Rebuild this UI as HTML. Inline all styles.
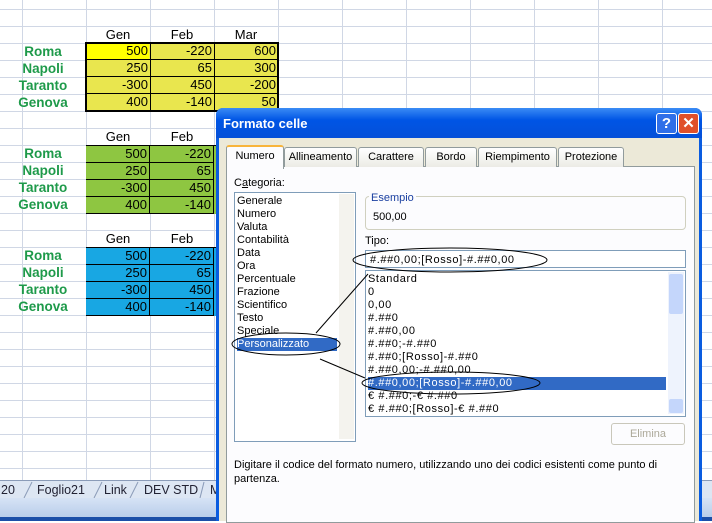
<!DOCTYPE html>
<html><head><meta charset="utf-8"><style>
body{margin:0;width:712px;height:521px;overflow:hidden;background:#fff;position:relative;font-family:"Liberation Sans",sans-serif}
.a{position:absolute}
.grid{position:absolute;left:0;top:0;width:712px;height:480px;
background-image:linear-gradient(#d0d7e5 1px,transparent 1px),linear-gradient(90deg,#d0d7e5 1px,transparent 1px);
background-size:64px 17px;background-position:22px 9px}
.lbl{position:absolute;left:0;width:86px;text-align:center;color:#1e9a4a;font-weight:bold;font-size:13.5px;line-height:17px}
.hd{position:absolute;width:64px;text-align:center;font-size:13px;line-height:17px;color:#000}
.c{position:absolute;width:61px;text-align:right;font-size:13px;line-height:16px;height:16px;padding-right:2px;border-right:1px solid #000;border-bottom:1px solid #000}
.t{font-family:"Liberation Sans",sans-serif;font-size:11px}
.tab{position:absolute;top:147px;height:19px;border:1px solid #919b9c;border-bottom:none;background:linear-gradient(#fff,#ecebe5);line-height:19px;text-align:center;font-size:11px;border-radius:3px 3px 0 0}
.li{height:13px;line-height:13px;white-space:nowrap}
.ty .li{letter-spacing:0.6px}
</style></head><body>
<div class="grid"></div>
<div class="hd" style="left:86px;top:26px">Gen</div><div class="hd" style="left:150px;top:26px">Feb</div><div class="hd" style="left:214px;top:26px">Mar</div>
<div class="lbl" style="top:43px">Roma</div><div class="lbl" style="top:60px">Napoli</div><div class="lbl" style="top:77px">Taranto</div><div class="lbl" style="top:94px">Genova</div>
<div class="a" style="left:85px;top:42px;width:190px;height:66px;border:2px solid #000;background:#e9e64e;box-sizing:content-box"></div>
<div class="a" style="left:87px;top:44px;width:62px;height:16px;background:#ffff00"></div>
<div class="a" style="left:86px;top:145px;width:130px;height:68px;background:#8ec641;border-top:1px solid #000"></div>
<div class="a" style="left:86px;top:247px;width:130px;height:68px;background:#18a7e3;border-top:1px solid #000"></div>
<div class="hd" style="left:86px;top:128px">Gen</div><div class="hd" style="left:150px;top:128px">Feb</div>
<div class="lbl" style="top:145px">Roma</div><div class="lbl" style="top:162px">Napoli</div><div class="lbl" style="top:179px">Taranto</div><div class="lbl" style="top:196px">Genova</div>
<div class="hd" style="left:86px;top:230px">Gen</div><div class="hd" style="left:150px;top:230px">Feb</div>
<div class="lbl" style="top:247px">Roma</div><div class="lbl" style="top:264px">Napoli</div><div class="lbl" style="top:281px">Taranto</div><div class="lbl" style="top:298px">Genova</div>

<div class="c" style="left:87px;top:43px">500</div><div class="c" style="left:151px;top:43px">-220</div><div class="c" style="left:215px;top:43px;border-right:none">600</div>
<div class="c" style="left:87px;top:60px">250</div><div class="c" style="left:151px;top:60px">65</div><div class="c" style="left:215px;top:60px;border-right:none">300</div>
<div class="c" style="left:87px;top:77px">-300</div><div class="c" style="left:151px;top:77px">450</div><div class="c" style="left:215px;top:77px;border-right:none">-200</div>
<div class="c" style="left:87px;top:94px;border-bottom:none">400</div><div class="c" style="left:151px;top:94px;border-bottom:none">-140</div><div class="c" style="left:215px;top:94px;border:none">50</div>

<div class="c" style="left:86px;top:146px">500</div><div class="c" style="left:150px;top:146px">-220</div>
<div class="c" style="left:86px;top:163px">250</div><div class="c" style="left:150px;top:163px">65</div>
<div class="c" style="left:86px;top:180px">-300</div><div class="c" style="left:150px;top:180px">450</div>
<div class="c" style="left:86px;top:197px">400</div><div class="c" style="left:150px;top:197px">-140</div>
<div class="c" style="left:86px;top:248px">500</div><div class="c" style="left:150px;top:248px">-220</div>
<div class="c" style="left:86px;top:265px">250</div><div class="c" style="left:150px;top:265px">65</div>
<div class="c" style="left:86px;top:282px">-300</div><div class="c" style="left:150px;top:282px">450</div>
<div class="c" style="left:86px;top:299px">400</div><div class="c" style="left:150px;top:299px">-140</div>

<div class="a" style="left:0;top:480px;width:712px;height:18px;background:#dde6f3;border-top:1px solid #8a9bb8;font-size:12.5px;line-height:18px;color:#223">
<span style="position:absolute;left:1px">20</span><span style="position:absolute;left:37px">Foglio21</span><span style="position:absolute;left:104px">Link</span><span style="position:absolute;left:144px">DEV STD</span><span style="position:absolute;left:210px">M</span>
<svg style="position:absolute;left:0;top:0" width="216" height="18"><g stroke="#8a9bb8" fill="none"><line x1="24" y1="17" x2="32" y2="1"/><line x1="94" y1="17" x2="102" y2="1"/><line x1="130" y1="17" x2="138" y2="1"/><line x1="200" y1="17" x2="204" y2="1"/></g></svg></div>
<div class="a" style="left:0;top:498px;width:712px;height:19px;background:linear-gradient(#d6e3f5,#b9cdea)"></div>
<div class="a" style="left:0;top:517px;width:712px;height:4px;background:#1c4fa8"></div>

<div class="a" style="left:216px;top:108px;width:486px;height:413px;background:#0a5ce0;border-radius:7px 7px 0 0"></div>
<div class="a" style="left:216px;top:108px;width:486px;height:30px;background:linear-gradient(#3b8cf5,#0055e5 40%,#0450d8);border-radius:7px 7px 0 0"></div>
<div class="a" style="left:223px;top:116px;color:#fff;font-weight:bold;font-size:13px">Formato celle</div>
<div class="a" style="left:656px;top:113px;width:19px;height:19px;background:#2f6fe8;border:1px solid #fff;border-radius:3px;color:#fff;font-weight:bold;font-size:15px;text-align:center;line-height:19px">?</div>
<div class="a" style="left:678px;top:113px;width:19px;height:19px;background:#e0502a;border:1px solid #fff;border-radius:3px;color:#fff;font-weight:bold;font-size:15px;text-align:center;line-height:19px">✕</div>
<div class="a" style="left:219px;top:138px;width:480px;height:383px;background:#ece9d8"></div>
<div class="a" style="left:226px;top:166px;width:467px;height:355px;background:#fcfcfe;border:1px solid #919b9c"></div>
<div class="tab t" style="left:226px;top:145px;height:22px;width:56px;background:#fcfcfe;border-top:2px solid #f8b43a">Numero</div>
<div class="tab t" style="left:284px;width:71px">Allineamento</div>
<div class="tab t" style="left:358px;width:64px">Carattere</div>
<div class="tab t" style="left:425px;width:50px">Bordo</div>
<div class="tab t" style="left:478px;width:77px">Riempimento</div>
<div class="tab t" style="left:558px;width:64px">Protezione</div>

<div class="a t" style="left:234px;top:177px">C<u>a</u>tegoria:</div>
<div class="a t" style="left:234px;top:192px;width:120px;height:248px;background:#fff;border:1px solid #7f9db9">
<div style="padding:2px 0 0 2px">
<div class="li">Generale</div><div class="li">Numero</div><div class="li">Valuta</div><div class="li">Contabilità</div><div class="li">Data</div><div class="li">Ora</div><div class="li">Percentuale</div><div class="li">Frazione</div><div class="li">Scientifico</div><div class="li">Testo</div><div class="li">Speciale</div><div class="li" style="background:#316ac5;color:#fff;width:100px">Personalizzato</div></div>
<div class="a" style="right:1px;top:1px;width:15px;height:245px;background:#f4f3ee"></div>
</div>
<div class="a" style="left:365px;top:196px;width:319px;height:32px;border:1px solid #d0d0bf;border-radius:4px"></div>
<div class="a t" style="left:369px;top:192px;background:#fcfcfe;color:#1a3fa0;padding:0 2px">Esempio</div>
<div class="a t" style="left:373px;top:211px">500,00</div>
<div class="a t" style="left:365px;top:235px">Tipo:</div>
<div class="a t" style="left:365px;top:250px;height:18px;background:#fff;border:1px solid #7f9db9;line-height:18px;padding-left:4px;box-sizing:border-box;width:321px;letter-spacing:0.6px">#.##0,00;[Rosso]-#.##0,00</div>
<div class="a t ty" style="left:365px;top:270px;width:319px;height:145px;background:#fff;border:1px solid #7f9db9">
<div style="padding:2px 0 0 2px">
<div class="li">Standard</div><div class="li">0</div><div class="li">0,00</div><div class="li">#.##0</div><div class="li">#.##0,00</div><div class="li">#.##0;-#.##0</div><div class="li">#.##0;[Rosso]-#.##0</div><div class="li">#.##0,00;-#.##0,00</div><div class="li" style="background:#316ac5;color:#fff;width:298px">#.##0,00;[Rosso]-#.##0,00</div><div class="li">€ #.##0;-€ #.##0</div><div class="li">€ #.##0;[Rosso]-€ #.##0</div></div>
<div class="a" style="right:1px;top:1px;width:16px;height:142px;background:#eef3fd"></div>
<div class="a" style="right:2px;top:3px;width:14px;height:40px;background:#c4d6fb;border-radius:2px"></div>
<div class="a" style="right:2px;bottom:3px;width:14px;height:14px;background:#c4d6fb;border-radius:2px"></div>
</div>
<div class="a t" style="left:611px;top:423px;width:72px;height:20px;border:1px solid #c9c7ba;border-radius:3px;color:#aca899;text-align:center;line-height:20px">Elimina</div>
<div class="a t" style="left:234px;top:458px;line-height:14px;width:440px">Digitare il codice del formato numero, utilizzando uno dei codici esistenti come punto di partenza.</div>

<svg class="a" style="left:0;top:0" width="712" height="521">
<g fill="none" stroke="#000" stroke-width="1">
<ellipse cx="450" cy="260" rx="97" ry="12"/>
<ellipse cx="286" cy="344" rx="54" ry="11"/>
<ellipse cx="451" cy="383" rx="89" ry="11"/>
<line x1="368" y1="274" x2="316" y2="333"/>
<line x1="320" y1="359" x2="365" y2="378"/>
</g></svg>
</body></html>
